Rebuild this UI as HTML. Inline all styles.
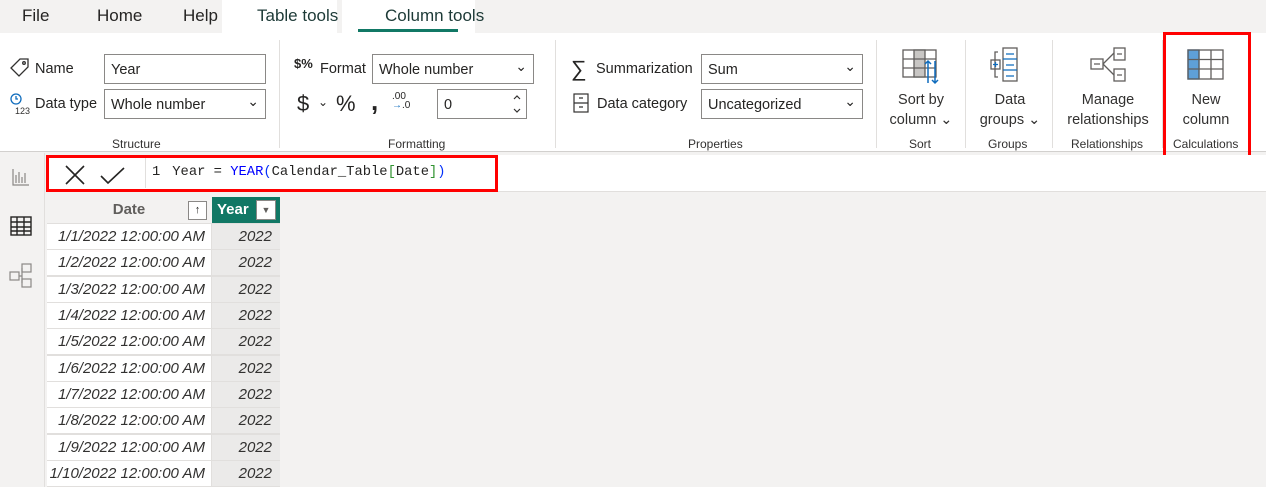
<!DOCTYPE html>
<html><head><meta charset="utf-8"><style>
*{box-sizing:border-box;margin:0;padding:0}
body{width:1266px;height:487px;overflow:hidden;background:#f3f2f1;font-family:"Liberation Sans",sans-serif;color:#252423;position:relative}
.a{position:absolute;white-space:nowrap}
.tab{font-size:17px;top:6px}
.lbl{font-size:14.5px}
.box{position:absolute;border:1px solid #8a8886;background:#fff;font-size:14.5px;padding:0 6px;line-height:28px;height:30px}
.dd::after{content:"⌄";position:absolute;right:6px;top:-4px;font-size:14px}
.sep{position:absolute;top:40px;width:1px;height:108px;background:#e1dfdd}
.glab{position:absolute;top:137px;font-size:12px;color:#323130}
.big{position:absolute;font-size:14.5px;text-align:center;line-height:20px;color:#323130}
.row{position:absolute;left:47px;width:233px;height:25px}
.row .d{position:absolute;left:0;width:164px;height:25px;background:#fff;text-align:right;padding-right:6px;font-style:italic;font-size:15px;line-height:25px;color:#323130}
.row .y{position:absolute;left:165px;width:68px;height:25px;background:#ebeae9;text-align:right;padding-right:8px;font-style:italic;font-size:15px;line-height:25px;color:#323130}
</style></head><body>
<!-- tabs -->
<div class="a" style="left:222px;top:0;width:115px;height:33px;background:#fff"></div>
<div class="a" style="left:342px;top:0;width:133px;height:33px;background:#fff"></div>
<div class="a tab" style="left:22px">File</div>
<div class="a tab" style="left:97px">Home</div>
<div class="a tab" style="left:183px">Help</div>
<div class="a tab" style="left:257px;color:#1d3a37">Table tools</div>
<div class="a tab" style="left:385px;color:#1d3a37">Column tools</div>
<div class="a" style="left:358px;top:29px;width:100px;height:3px;background:#117865"></div>
<!-- ribbon -->
<div class="a" style="left:0;top:33px;width:1266px;height:119px;background:#fff;border-bottom:1px solid #d2d0ce"></div>
<svg class="a" style="left:9px;top:57px" width="22" height="22" viewBox="0 0 22 22" fill="none" stroke="#323130" stroke-width="1.3"><path d="M11 2h8v8l-9 9-8-8z"/><circle cx="15" cy="6" r="1.3"/></svg>
<div class="a lbl" style="left:35px;top:61px">Name</div>
<svg class="a" style="left:9px;top:92px" width="24" height="24" viewBox="0 0 24 24" fill="none" stroke="#0f6cbd" stroke-width="1.3"><circle cx="7" cy="7" r="5"/><path d="M7 4v3h2"/><text x="6" y="22" font-size="9" fill="#323130" stroke="none" font-family="Liberation Sans">123</text></svg>
<div class="a lbl" style="left:35px;top:96px">Data type</div>
<div class="box" style="left:104px;top:54px;width:162px;line-height:30px">Year</div>
<div class="box dd" style="left:104px;top:89px;width:162px;line-height:30px">Whole number</div>
<div class="glab" style="left:112px">Structure</div>
<div class="sep" style="left:279px"></div>
<div class="a" style="left:294px;top:56px;font-size:13px;font-weight:bold">$%</div>
<div class="a lbl" style="left:320px;top:61px">Format</div>
<div class="box dd" style="left:372px;top:54px;width:162px;line-height:30px">Whole number</div>
<div class="a" style="left:297px;top:91px;font-size:22px">$</div>
<div class="a" style="left:318px;top:95px;font-size:12px">⌄</div>
<div class="a" style="left:336px;top:91px;font-size:22px">%</div>
<div class="a" style="left:371px;top:86px;font-size:26px;font-weight:bold">,</div>
<div class="a" style="left:392px;top:92px;font-size:10px;line-height:9px">.00<br><span style="color:#0f6cbd">→</span>.0</div>
<div class="box" style="left:437px;top:89px;width:90px;line-height:30px">0
<svg style="position:absolute;right:4px;top:3px" width="10" height="22" viewBox="0 0 10 22" fill="none" stroke="#323130" stroke-width="1.2"><path d="M2 6l3-3 3 3M2 16l3 3 3-3"/></svg></div>
<div class="glab" style="left:388px">Formatting</div>
<div class="sep" style="left:555px"></div>
<div class="a" style="left:571px;top:56px;font-size:22px">∑</div>
<div class="a lbl" style="left:596px;top:61px">Summarization</div>
<svg class="a" style="left:572px;top:92px" width="18" height="22" viewBox="0 0 18 22" fill="none" stroke="#323130" stroke-width="1.2"><rect x="2" y="2" width="14" height="18"/><path d="M2 11h14M7 6h4M7 15h4"/></svg>
<div class="a lbl" style="left:597px;top:96px">Data category</div>
<div class="box dd" style="left:701px;top:54px;width:162px;line-height:30px">Sum</div>
<div class="box dd" style="left:701px;top:89px;width:162px;line-height:30px">Uncategorized</div>
<div class="glab" style="left:688px">Properties</div>
<div class="sep" style="left:876px"></div>
<svg class="a" style="left:902px;top:49px" width="40" height="38" viewBox="0 0 40 38" fill="none" stroke="#605e5c" stroke-width="1.3"><rect x="1" y="1" width="33" height="27"/><rect x="12" y="1" width="11" height="27" fill="#c8c6c4"/><path d="M1 10h33M1 19h33"/><path d="M26 34V12m-3 3 3-3 3 3M33 12v22m-3-3 3 3 3-3" stroke="#0f6cbd" stroke-width="1.5"/></svg>
<div class="big" style="left:886px;top:90px;width:70px">Sort by<br>column ⌄</div>
<div class="glab" style="left:909px">Sort</div>
<div class="sep" style="left:965px"></div>
<svg class="a" style="left:990px;top:47px" width="38" height="36" viewBox="0 0 38 36" fill="none" stroke="#605e5c" stroke-width="1.3"><rect x="13" y="1" width="14" height="33"/><path d="M13 12h14M13 23h14M16 7h8M16 18h8M16 29h8" stroke="#0f6cbd"/><path d="M8 5H5v25h3"/><rect x="1" y="13" width="9" height="9"/><path d="M3 17.5h5M5.5 15v5" stroke="#0f6cbd"/></svg>
<div class="big" style="left:975px;top:90px;width:70px">Data<br>groups ⌄</div>
<div class="glab" style="left:988px">Groups</div>
<div class="sep" style="left:1052px"></div>
<svg class="a" style="left:1090px;top:47px" width="40" height="38" viewBox="0 0 40 38" fill="none" stroke="#605e5c" stroke-width="1.3"><rect x="1" y="12" width="12" height="10"/><rect x="24" y="1" width="11" height="12"/><rect x="24" y="22" width="11" height="12"/><path d="M13 17l11-11M13 17l11 11M4 17h6M27 7h5M27 28h5"/></svg>
<div class="big" style="left:1060px;top:90px;width:96px">Manage<br>relationships</div>
<div class="glab" style="left:1071px">Relationships</div>
<div class="sep" style="left:1162px"></div>
<svg class="a" style="left:1187px;top:49px" width="38" height="32" viewBox="0 0 38 32" fill="none" stroke="#605e5c" stroke-width="1.3"><rect x="1" y="1" width="11" height="29" fill="#5ea0d8" stroke="#1e6fb8"/><rect x="1" y="1" width="35" height="29"/><path d="M1 10.5h35M1 20h35M12 1v29M24 1v29"/></svg>
<div class="big" style="left:1170px;top:90px;width:72px">New<br>column</div>
<div class="glab" style="left:1173px">Calculations</div>
<div class="a" style="left:1163px;top:32px;width:88px;height:128px;border:3px solid #ff0000"></div>
<!-- left rail -->
<div class="a" style="left:0;top:153px;width:45px;height:334px;background:#f3f2f1;border-right:1px solid #e1dfdd"></div>
<svg class="a" style="left:11px;top:167px" width="20" height="20" viewBox="0 0 20 20" fill="none" stroke="#8a8886" stroke-width="1.2"><path d="M2 2v16h16M5 16V8M8 16V5M11 16v-6M14 16V6"/></svg>
<svg class="a" style="left:9px;top:215px" width="24" height="22" viewBox="0 0 24 22" fill="none" stroke="#252423" stroke-width="1.4"><rect x="2" y="2" width="20" height="18"/><path d="M2 7h20M2 12h20M2 16h20M8 2v18M15 2v18"/></svg>
<svg class="a" style="left:9px;top:263px" width="24" height="26" viewBox="0 0 24 26" fill="none" stroke="#8a8886" stroke-width="1.2"><rect x="1" y="9" width="9" height="8"/><rect x="13" y="1" width="9" height="8"/><rect x="13" y="16" width="9" height="8"/><path d="M10 13h3M13 5v15"/></svg>
<!-- formula bar -->
<div class="a" style="left:46px;top:155px;width:1220px;height:37px;background:#fff;border-bottom:1px solid #e1dfdd"></div>
<div class="a" style="left:145px;top:158px;width:1px;height:30px;background:#e1dfdd"></div>
<svg class="a" style="left:63px;top:163px" width="66" height="24" viewBox="0 0 66 24" fill="none" stroke="#252423" stroke-width="1.6"><path d="M3 3l18 18M21 3L3 21M38 13l7 7 16-15"/></svg>
<div class="a" style="left:152px;top:165px;font-family:'Liberation Mono',monospace;font-size:13.8px">1<span style="display:inline-block;width:12px"></span>Year = <span style="color:#0000ff">YEAR</span><span style="color:#0431fa">(</span>Calendar_Table<span style="color:#319331">[</span>Date<span style="color:#319331">]</span><span style="color:#0431fa">)</span></div>
<div class="a" style="left:46px;top:155px;width:452px;height:37px;border:3px solid #ff0000"></div>
<!-- table -->
<div class="a" style="left:47px;top:197px;width:164px;height:26px;background:#f3f2f1;text-align:center;font-weight:bold;font-size:15px;line-height:26px;color:#605e5c">Date</div>
<div class="a" style="left:188px;top:201px;width:19px;height:19px;border:1px solid #8a8886;background:#fff;font-size:11px;text-align:center;line-height:16px">↑</div>
<div class="a" style="left:212px;top:197px;width:68px;height:26px;background:#117865;color:#fff;font-weight:bold;font-size:15px;line-height:26px;padding-left:5px">Year</div>
<div class="a" style="left:256px;top:200px;width:20px;height:20px;background:#fff;border:1px solid #8a8886;font-size:9px;text-align:center;line-height:18px;color:#605e5c">▼</div>
<div class="a" style="left:47px;top:223px;width:233px;height:264px;background:#e1dfdd"></div>
<div class="row" style="top:224px"><div class="d">1/1/2022 12:00:00 AM</div><div class="y">2022</div></div>
<div class="row" style="top:250px"><div class="d">1/2/2022 12:00:00 AM</div><div class="y">2022</div></div>
<div class="row" style="top:277px"><div class="d">1/3/2022 12:00:00 AM</div><div class="y">2022</div></div>
<div class="row" style="top:303px"><div class="d">1/4/2022 12:00:00 AM</div><div class="y">2022</div></div>
<div class="row" style="top:329px"><div class="d">1/5/2022 12:00:00 AM</div><div class="y">2022</div></div>
<div class="row" style="top:356px"><div class="d">1/6/2022 12:00:00 AM</div><div class="y">2022</div></div>
<div class="row" style="top:382px"><div class="d">1/7/2022 12:00:00 AM</div><div class="y">2022</div></div>
<div class="row" style="top:408px"><div class="d">1/8/2022 12:00:00 AM</div><div class="y">2022</div></div>
<div class="row" style="top:435px"><div class="d">1/9/2022 12:00:00 AM</div><div class="y">2022</div></div>
<div class="row" style="top:461px"><div class="d">1/10/2022 12:00:00 AM</div><div class="y">2022</div></div>
</body></html>
